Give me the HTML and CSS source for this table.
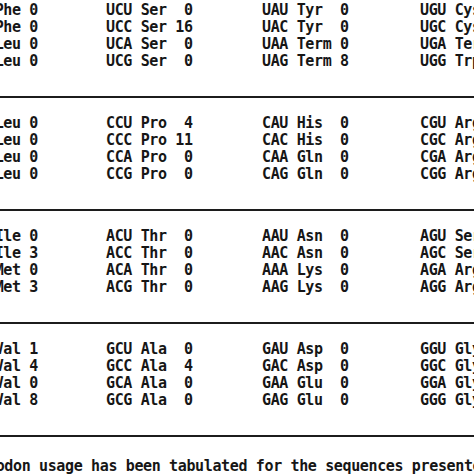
FILE: index.html
```html
<!DOCTYPE html>
<html>
<head>
<meta charset="utf-8">
<link rel="stylesheet" href="styles.css">
</head>
<body>
<div class="page">
  <div class="table">
    <div class="group first">
      <span>UUU Phe 0</span><span>UCU Ser  0</span><span>UAU Tyr  0</span><span>UGU Cys  0</span>
      <span>UUC Phe 0</span><span>UCC Ser 16</span><span>UAC Tyr  0</span><span>UGC Cys  0</span>
      <span>UUA Leu 0</span><span>UCA Ser  0</span><span>UAA Term 0</span><span>UGA Term 0</span>
      <span>UUG Leu 0</span><span>UCG Ser  0</span><span>UAG Term 8</span><span>UGG Trp  0</span>
    </div>
    <div class="group">
      <span>CUU Leu 0</span><span>CCU Pro  4</span><span>CAU His  0</span><span>CGU Arg  0</span>
      <span>CUC Leu 0</span><span>CCC Pro 11</span><span>CAC His  0</span><span>CGC Arg  0</span>
      <span>CUA Leu 0</span><span>CCA Pro  0</span><span>CAA Gln  0</span><span>CGA Arg  0</span>
      <span>CUG Leu 0</span><span>CCG Pro  0</span><span>CAG Gln  0</span><span>CGG Arg  0</span>
    </div>
    <div class="group">
      <span>AUU Ile 0</span><span>ACU Thr  0</span><span>AAU Asn  0</span><span>AGU Ser  0</span>
      <span>AUC Ile 3</span><span>ACC Thr  0</span><span>AAC Asn  0</span><span>AGC Ser  0</span>
      <span>AUA Met 0</span><span>ACA Thr  0</span><span>AAA Lys  0</span><span>AGA Arg  0</span>
      <span>AUG Met 3</span><span>ACG Thr  0</span><span>AAG Lys  0</span><span>AGG Arg  0</span>
    </div>
    <div class="group">
      <span>GUU Val 1</span><span>GCU Ala  0</span><span>GAU Asp  0</span><span>GGU Gly  0</span>
      <span>GUC Val 4</span><span>GCC Ala  4</span><span>GAC Asp  0</span><span>GGC Gly  0</span>
      <span>GUA Val 0</span><span>GCA Ala  0</span><span>GAA Glu  0</span><span>GGA Gly  0</span>
      <span>GUG Val 8</span><span>GCG Ala  0</span><span>GAG Glu  0</span><span>GGG Gly  0</span>
    </div>
  </div>
  <p class="caption">Codon usage has been tabulated for the sequences presented in</p>
</div>
</body>
</html>
```

FILE: styles.css
```css
html, body {
  margin: 0;
  padding: 0;
  background: #ffffff;
}

body {
  width: 474px;
  height: 474px;
  overflow: hidden;
}

.page {
  font-family: "DejaVu Sans Mono", "Liberation Mono", monospace;
  font-size: 15px;
  letter-spacing: -0.36px;
  font-weight: bold;
  line-height: 17px;
  color: #161616;
}

.table {
  margin-left: -40px;
}

.group {
  display: grid;
  grid-template-columns: 146px 156px 158px auto;
  padding-top: 16.5px;
  padding-bottom: 26.5px;
  border-bottom: 2px solid #1c1c1c;
}

.group span {
  white-space: pre;
}

.group.first {
  margin-top: -15px;
}

.caption {
  margin: 20.5px 0 0 -13px;
  white-space: pre;
}
```
